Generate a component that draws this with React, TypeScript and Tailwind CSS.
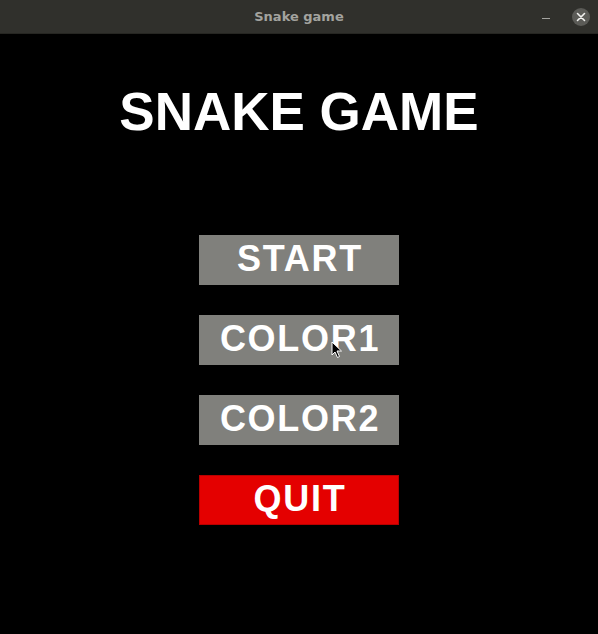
import React from 'react';

const menu = [
  { label: 'START', bg: 'bg-[#80807c]' },
  { label: 'COLOR1', bg: 'bg-[#80807c]' },
  { label: 'COLOR2', bg: 'bg-[#80807c]' },
  { label: 'QUIT', bg: 'bg-[#e40000] border border-[#b80000]' },
];

function TitleBar() {
  return (
    <div className="relative h-[34px] bg-[#30302c] border-b border-[#262622] flex items-center justify-center">
      <span
        className="text-[13px] font-bold text-[#a3a39f]"
        style={{ fontFamily: '"DejaVu Sans", "Noto Sans", sans-serif' }}
      >
        Snake game
      </span>
      <div className="absolute right-[8px] top-0 h-full flex items-center gap-[22px]">
        <div className="w-[8px] h-[1px] bg-[#a3a39f] mt-[4px]" />
        <div className="w-[18px] h-[18px] rounded-full bg-[#5b5b57] flex items-center justify-center">
          <svg width="10" height="10" viewBox="0 0 10 10">
            <path d="M1.5 1.5 L8.5 8.5 M8.5 1.5 L1.5 8.5" stroke="#f2f2f0" strokeWidth="1.6" strokeLinecap="round" />
          </svg>
        </div>
      </div>
    </div>
  );
}

export default function App() {
  return (
    <div
      className="w-[598px] h-[634px] bg-black flex flex-col overflow-hidden"
      style={{ fontFamily: '"Liberation Sans", Arial, sans-serif' }}
    >
      <TitleBar />
      <div className="relative flex-1 flex flex-col items-center pt-[51px]">
        <h1 className="text-[53px] leading-none font-bold text-white">SNAKE GAME</h1>
        <div className="mt-[97px] flex flex-col gap-[30px]">
          {menu.map((item) => (
            <div
              key={item.label}
              className={`w-[200px] h-[50px] flex items-center justify-center pb-[3px] pl-[2px] ${item.bg}`}
            >
              <span className="text-[36px] leading-none font-bold tracking-[1.7px] text-white">{item.label}</span>
            </div>
          ))}
        </div>
        {/* mouse pointer */}
        <svg className="absolute left-[331px] top-[307px]" width="12" height="18" viewBox="0 0 12 18">
          <path d="M1 1 L1 14 L4 11 L6.5 16.5 L8.5 15.5 L6 10 L10.5 10 Z" fill="#000" stroke="#fff" strokeWidth="1" strokeLinejoin="round" />
        </svg>
      </div>
    </div>
  );
}
